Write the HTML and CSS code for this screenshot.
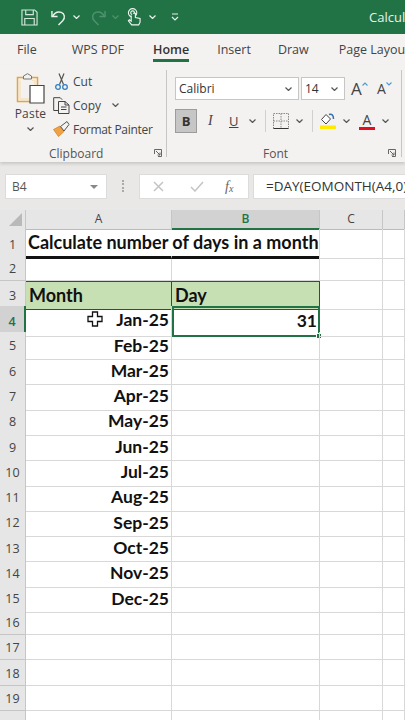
FILE: index.html
```html
<!DOCTYPE html>
<html lang="en">
<head>
<meta charset="utf-8">
<title>Calculate number of days</title>
<link rel="stylesheet" href="styles.css">
</head>
<body>
<div class="app">
  <header class="titlebar">
    <svg class="qa save" width="17" height="17" viewBox="0 0 18 18" fill="none" stroke="#d5e8dc" stroke-width="1.2"><path d="M1 1h13.500L17 3.500V17H1z"/><path d="M5 1v5h8V1M4 17v-7h10v7"/></svg>
    <svg class="qa undo" width="15" height="17" viewBox="0 0 16 18" fill="none" stroke="#e8f2ec" stroke-width="1.5"><path d="M1 2v6h6"/><path d="M1.500 8C4 3.500 8 2.500 11 3.500c3.500 1.300 4.500 5.500 1.500 9L8 17"/></svg>
    <svg class="qa chev-u" width="7" height="4" viewBox="0 0 7 4" fill="none" stroke="#e8f2ec" stroke-width="1.2"><path d="M.5.5l3 3 3-3"/></svg>
    <svg class="qa redo" width="15" height="17" viewBox="0 0 16 18" fill="none" stroke="#4f9270" stroke-width="1.5"><path d="M15 2v6H9"/><path d="M14.500 8C12 3.500 8 2.500 5 3.500 1.500 4.800.5 9 3.500 12.500L8 17"/></svg>
    <svg class="qa chev-r" width="7" height="4" viewBox="0 0 7 4" fill="none" stroke="#4f9270" stroke-width="1.2"><path d="M.5.5l3 3 3-3"/></svg>
    <svg class="qa touch" width="14" height="18" viewBox="0 0 15 19" fill="none" stroke="#eef6f1" stroke-width="1.2"><circle cx="6" cy="5" r="4.500"/><circle cx="6" cy="5" r="2"/><path d="M4.500 8v6l-2-1.500-1 1L5 18h7.500l1.500-3v-4l-5-1V5.500H6.500" fill="#217346"/></svg>
    <svg class="qa chev-t" width="7" height="4" viewBox="0 0 7 4" fill="none" stroke="#e8f2ec" stroke-width="1.2"><path d="M.5.5l3 3 3-3"/></svg>
    <svg class="qa custom" width="8" height="8" viewBox="0 0 8 8" fill="none" stroke="#e8f2ec" stroke-width="1.2"><path d="M1 1h6M1 4l3 3 3-3"/></svg>
    <span class="doc-title">Calculate number of days</span>
  </header>

  <nav class="tabs">
    <span class="tab t-file">File</span>
    <span class="tab t-wps">WPS PDF</span>
    <span class="tab t-home">Home</span>
    <span class="tab t-insert">Insert</span>
    <span class="tab t-draw">Draw</span>
    <span class="tab t-page">Page Layout</span>
  </nav>

  <section class="ribbon">
    <div class="group clipboard">
      <div class="group-body clip-body">
        <div class="paste">
          <svg class="paste-icon" width="29" height="31" viewBox="0 0 29 31" fill="none"><path d="M7 4.500H1.500V28.500H14" stroke="#e8a33d" stroke-width="1.500"/><path d="M15 4.500h6.500V12" stroke="#e8a33d" stroke-width="1.500"/><path d="M4 7.500V26h9.500M16 7.500h3V12" stroke="#f7e2bd" stroke-width="1.500"/><path d="M7.500 6V3L11.500.7 15.500 3v3z" fill="#f3f2f1" stroke="#777" stroke-width="1"/><path d="M14 12.500H28V30H14z" fill="#fff" stroke="#444" stroke-width="1.200"/></svg>
          <span class="paste-label">Paste</span>
          <svg class="paste-chev" width="7" height="4" viewBox="0 0 7 4" fill="none" stroke="#555" stroke-width="1.200"><path d="M.5.5l3 3 3-3"/></svg>
        </div>
        <div class="clip-list">
          <div class="clip-row">
            <svg class="clip-icon" width="17" height="17" viewBox="0 0 17 17" fill="none"><path d="M6 .5l4.500 11M11 .5l-4.500 11" stroke="#555" stroke-width="1.200"/><circle cx="5" cy="14" r="2.300" stroke="#2f7fc1" stroke-width="1.300"/><circle cx="12" cy="14" r="2.300" stroke="#2f7fc1" stroke-width="1.300"/></svg>
            <span>Cut</span>
          </div>
          <div class="clip-row">
            <svg class="clip-icon" width="17" height="17" viewBox="0 0 17 17" fill="none" stroke="#444" stroke-width="1"><path d="M6 13.500H.7V.7h6.500l2 2"/><path d="M5.500 4.500h6.500l4 3.500v8.500H5.500z" fill="#f3f2f1"/><path d="M8 10h5.500M8 12.500h5.500M12 4.500V8h4"/></svg>
            <span>Copy</span>
            <svg class="copy-chev" width="7" height="4" viewBox="0 0 7 4" fill="none" stroke="#555" stroke-width="1.200"><path d="M.5.5l3 3 3-3"/></svg>
          </div>
          <div class="clip-row">
            <svg class="clip-icon" width="17" height="16" viewBox="0 0 17 16" fill="none"><path d="M7 5L.5 8.500l5 7L11 10.500z" fill="#eea243" stroke="#d9822b" stroke-width=".8"/><path d="M7.500 5.500l3.500 4.500 5-6.500-2-3z" fill="#f3f2f1" stroke="#555" stroke-width="1"/></svg>
            <span class="painter">Format Painter</span>
          </div>
        </div>
      </div>
      <div class="group-foot clip-foot">
        <span class="group-name">Clipboard</span>
        <svg class="launcher" width="8" height="8" viewBox="0 0 8 8" fill="none" stroke="#666"><path d="M.5 5V.5H7.500V7.500H4"/><path d="M2 2l4 4M6 3.500V6H3.500"/></svg>
      </div>
    </div>

    <div class="group font">
      <div class="group-body font-body">
        <div class="font-row">
          <div class="combo combo-name"><span>Calibri</span><svg width="7" height="4" viewBox="0 0 7 4" fill="none" stroke="#555" stroke-width="1.200"><path d="M.5.5l3 3 3-3"/></svg></div>
          <div class="combo combo-size"><span>14</span><svg width="7" height="4" viewBox="0 0 7 4" fill="none" stroke="#555" stroke-width="1.200"><path d="M.5.5l3 3 3-3"/></svg></div>
          <span class="grow-a">A<svg width="6" height="4" viewBox="0 0 6 4" fill="none" stroke="#4a9bd4" stroke-width="1.100"><path d="M.5 3.500L3 1l2.500 2.500"/></svg></span>
          <span class="shrink-a">A<svg width="6" height="4" viewBox="0 0 6 4" fill="none" stroke="#4a9bd4" stroke-width="1.100"><path d="M.5.5L3 3l2.500-2.500"/></svg></span>
        </div>
        <div class="font-row format-row">
          <span class="btn-b">B</span>
          <span class="btn-i">I</span>
          <span class="btn-u">U</span>
          <svg class="chev c-u" width="7" height="4" viewBox="0 0 7 4" fill="none" stroke="#555" stroke-width="1.200"><path d="M.5.5l3 3 3-3"/></svg>
          <span class="vsep s1"></span>
          <svg class="borders" width="16" height="16" viewBox="0 0 16 16" fill="none" stroke="#888" stroke-width="1" stroke-dasharray="1.500 1"><path d="M.5.500h15v15H.5zM8 .5v15M.5 8h15"/><path d="M.5 15.500h15" stroke="#333" stroke-dasharray="none"/></svg>
          <svg class="chev c-b" width="7" height="4" viewBox="0 0 7 4" fill="none" stroke="#555" stroke-width="1.200"><path d="M.5.5l3 3 3-3"/></svg>
          <span class="vsep s2"></span>
          <svg class="fill" width="16" height="16" viewBox="0 0 16 16" fill="none"><path d="M6 1.500L1.500 6.500 6 11l4.500-5z" fill="#fff" stroke="#444"/><path d="M9 1.500c3-1 4.500 1 4.500 4.500" stroke="#2f6fb3" stroke-width="1.500"/><rect y="12.500" width="16" height="3.500" fill="#ffea00"/></svg>
          <svg class="chev c-f" width="7" height="4" viewBox="0 0 7 4" fill="none" stroke="#555" stroke-width="1.200"><path d="M.5.5l3 3 3-3"/></svg>
          <span class="color-a">A</span>
          <svg class="chev c-a" width="7" height="4" viewBox="0 0 7 4" fill="none" stroke="#555" stroke-width="1.200"><path d="M.5.5l3 3 3-3"/></svg>
        </div>
      </div>
      <div class="group-foot font-foot">
        <span class="group-name">Font</span>
        <svg class="launcher" width="8" height="8" viewBox="0 0 8 8" fill="none" stroke="#666"><path d="M.5 5V.5H7.500V7.500H4"/><path d="M2 2l4 4M6 3.500V6H3.500"/></svg>
      </div>
    </div>
  </section>

  <section class="formula">
    <div class="name-box"><span>B4</span><i class="name-arrow"></i></div>
    <span class="grip"></span>
    <div class="fx-box">
      <svg width="11" height="11" viewBox="0 0 11 11" fill="none" stroke="#c4c4c4" stroke-width="1.500"><path d="M1 1l9 9M10 1l-9 9"/></svg>
      <svg width="14" height="11" viewBox="0 0 14 11" fill="none" stroke="#c4c4c4" stroke-width="1.500"><path d="M1 6l4 4 8-9"/></svg>
      <span class="fx">f<sub>x</sub></span>
    </div>
    <div class="formula-input">=DAY(EOMONTH(A4,0))</div>
  </section>

  <section class="sheet">
    <div class="row col-head">
      <div class="corner"><i></i></div><div class="ch">A</div><div class="ch sel">B</div><div class="ch">C</div><div class="ch last"></div>
    </div>
    <div class="row r1"><div class="rh">1</div><div class="c a thick title">Calculate number of days in a month</div><div class="c b thick"></div><div class="c d"></div><div class="c e"></div></div>
    <div class="row"><div class="rh">2</div><div class="c a"></div><div class="c b"></div><div class="c d"></div><div class="c e"></div></div>
    <div class="row"><div class="rh">3</div><div class="c a hd">Month</div><div class="c b hd">Day</div><div class="c d"></div><div class="c e"></div></div>
    <div class="row"><div class="rh active">4</div><div class="c a val cursor-cell"><svg class="cursor" width="16" height="16" viewBox="0 0 16 16" fill="#fff" stroke="#111" stroke-width="1.300"><path d="M5.500 1h5v4.500H15v5h-4.500V15h-5v-4.500H1v-5h4.500z"/></svg>Jan-25</div><div class="c b val current">31<i class="handle"></i></div><div class="c d"></div><div class="c e"></div></div>
    <div class="row"><div class="rh">5</div><div class="c a val">Feb-25</div><div class="c b"></div><div class="c d"></div><div class="c e"></div></div>
    <div class="row"><div class="rh">6</div><div class="c a val">Mar-25</div><div class="c b"></div><div class="c d"></div><div class="c e"></div></div>
    <div class="row"><div class="rh">7</div><div class="c a val">Apr-25</div><div class="c b"></div><div class="c d"></div><div class="c e"></div></div>
    <div class="row"><div class="rh">8</div><div class="c a val">May-25</div><div class="c b"></div><div class="c d"></div><div class="c e"></div></div>
    <div class="row"><div class="rh">9</div><div class="c a val">Jun-25</div><div class="c b"></div><div class="c d"></div><div class="c e"></div></div>
    <div class="row"><div class="rh">10</div><div class="c a val">Jul-25</div><div class="c b"></div><div class="c d"></div><div class="c e"></div></div>
    <div class="row"><div class="rh">11</div><div class="c a val">Aug-25</div><div class="c b"></div><div class="c d"></div><div class="c e"></div></div>
    <div class="row"><div class="rh">12</div><div class="c a val">Sep-25</div><div class="c b"></div><div class="c d"></div><div class="c e"></div></div>
    <div class="row"><div class="rh">13</div><div class="c a val">Oct-25</div><div class="c b"></div><div class="c d"></div><div class="c e"></div></div>
    <div class="row"><div class="rh">14</div><div class="c a val">Nov-25</div><div class="c b"></div><div class="c d"></div><div class="c e"></div></div>
    <div class="row"><div class="rh">15</div><div class="c a val">Dec-25</div><div class="c b"></div><div class="c d"></div><div class="c e"></div></div>
    <div class="row"><div class="rh">16</div><div class="c a"></div><div class="c b"></div><div class="c d"></div><div class="c e"></div></div>
    <div class="row"><div class="rh">17</div><div class="c a"></div><div class="c b"></div><div class="c d"></div><div class="c e"></div></div>
    <div class="row"><div class="rh">18</div><div class="c a"></div><div class="c b"></div><div class="c d"></div><div class="c e"></div></div>
    <div class="row"><div class="rh">19</div><div class="c a"></div><div class="c b"></div><div class="c d"></div><div class="c e"></div></div>
    <div class="row"><div class="rh"></div><div class="c a"></div><div class="c b"></div><div class="c d"></div><div class="c e"></div></div>
  </section>
</div>
</body>
</html>
```
FILE: styles.css
```css
* { box-sizing: border-box; }
html, body { margin: 0; padding: 0; }
body { width: 405px; height: 720px; overflow: hidden; background: #fff; font-family: "Open Sans", "Noto Sans", sans-serif; color: #444; }
.app { width: 405px; height: 720px; overflow: hidden; display: flex; flex-direction: column; }

/* Title bar */
.titlebar { flex: none; height: 34px; background: #217346; display: flex; align-items: center; white-space: nowrap; overflow: hidden; }
.qa { flex: none; display: block; }
.save { margin-left: 21px; }
.undo { margin-left: 13px; }
.chev-u { margin-left: 7px; }
.redo { margin-left: 11px; }
.chev-r { margin-left: 6px; }
.touch { margin-left: 8px; }
.chev-t { margin-left: 8px; }
.custom { margin-left: 15px; }
.doc-title { margin-left: 190px; color: #e8f2ec; font-size: 13px; flex: none; }

/* Tabs */
.tabs { flex: none; height: 31px; background: #f3f2f1; display: flex; white-space: nowrap; overflow: hidden; font-size: 12.500px; color: #444; }
.tab { flex: none; height: 28px; padding-top: 7px; line-height: 18px; }
.t-file { margin-left: 17px; }
.t-wps { margin-left: 35px; }
.t-home { margin-left: 29px; font-weight: 600; color: #333; border-bottom: 3px solid #217346; height: 28px; }
.t-insert { margin-left: 28px; }
.t-draw { margin-left: 27px; }
.t-page { margin-left: 30px; }

/* Ribbon */
.ribbon { flex: none; height: 97px; background: #f3f2f1; display: flex; box-shadow: 0 2px 3px rgba(0,0,0,.14); position: relative; font-size: 12px; color: #444; }
.group { display: flex; flex-direction: column; position: relative; }
.group::after { content: ""; position: absolute; right: 0; top: 5px; bottom: 5px; width: 1px; background: #c8c6c4; }
.group-body { flex: 1; min-height: 0; }
.group-foot { flex: none; height: 18px; display: flex; align-items: center; color: #555; font-size: 12px; }
.launcher { flex: none; margin-left: auto; }
.clipboard { width: 167px; }
.clip-body { display: flex; padding-left: 16px; }
.paste { width: 29px; display: flex; flex-direction: column; align-items: center; padding-top: 8px; margin-right: 6px; }
.paste-icon { display: block; flex: none; }
.paste-label { line-height: 16px; margin-top: 2px; letter-spacing: .2px; }
.paste-chev { margin-top: 5px; }
.clip-list { display: flex; flex-direction: column; padding-top: 4px; }
.clip-row { flex: none; height: 24px; display: flex; align-items: center; font-size: 12px; white-space: nowrap; }
.clip-icon { flex: none; margin-right: 3px; margin-left: 2px; }
.copy-chev { margin-left: 11px; }
.painter { letter-spacing: -.3px; }
.clip-foot { padding: 0 5px 0 49px; }
.font { width: 235px; }
.font-body { padding: 12px 0 0 8px; display: flex; flex-direction: column; }
.font-row { display: flex; align-items: center; height: 23px; }
.combo { height: 23px; background: #fff; border: 1px solid #c8c6c4; display: flex; align-items: center; justify-content: space-between; padding: 0 6px 0 3px; font-size: 12px; color: #333; }
.combo-name { width: 124px; margin-right: 2px; }
.combo-size { width: 44px; margin-right: 6px; }
.grow-a, .shrink-a { display: flex; align-items: flex-start; color: #444; }
.grow-a { font-size: 17px; line-height: 20px; width: 26px; }
.shrink-a { font-size: 14px; line-height: 20px; }
.grow-a svg, .shrink-a svg { margin-top: 3px; }
.format-row { margin-top: 9px; height: 24px; }
.btn-b { width: 22px; height: 24px; background: #c6c6c6; border: 1px solid #9c9c9c; display: flex; align-items: center; justify-content: center; font-weight: 700; font-size: 13px; color: #333; }
.btn-i { margin-left: 11px; width: 10px; font-family: "Liberation Serif", serif; font-style: italic; font-size: 14px; color: #444; }
.btn-u { margin-left: 11px; width: 10px; font-size: 13px; text-decoration: underline; color: #444; }
.chev { flex: none; }
.c-u { margin-left: 10px; }
.vsep { width: 1px; height: 22px; background: #d2d0ce; flex: none; }
.s1 { margin-left: 9px; }
.borders { flex: none; margin-left: 7px; }
.c-b { margin-left: 7px; }
.s2 { margin-left: 9px; }
.fill { flex: none; margin-left: 7px; }
.c-f { margin-left: 7px; }
.color-a { margin-left: 9px; width: 16px; font-size: 14px; line-height: 14px; text-align: center; border-bottom: 3px solid #e2101e; color: #444; }
.c-a { margin-left: 7px; }
.font-foot { padding: 0 6px 0 96px; }

/* Formula bar */
.formula { flex: none; height: 48px; background: #e9e8e7; display: flex; padding: 12px 0 0 5px; align-items: flex-start; font-size: 12px; color: #444; white-space: nowrap; overflow: hidden; }
.name-box { flex: none; width: 102px; height: 25px; background: #fff; border: 1px solid #dcdcdc; display: flex; align-items: center; justify-content: space-between; padding: 0 8px 0 6px; color: #555; }
.name-arrow { width: 0; height: 0; border: 4px solid transparent; border-top: 4px solid #888; border-bottom: 0; }
.grip { flex: none; width: 2px; height: 12px; margin: 6px 15px 0 15px; border-left: 2px dotted #aaa; }
.fx-box { flex: none; width: 110px; height: 25px; background: #fff; border: 1px solid #dcdcdc; display: flex; align-items: center; padding-left: 13px; }
.fx-box svg:nth-child(2) { margin-left: 26px; }
.fx { margin-left: 21px; font-family: "Liberation Serif", serif; font-style: italic; font-size: 14px; color: #666; line-height: 14px; }
.fx sub { font-size: 10px; line-height: 0; vertical-align: -1px; }
.formula-input { margin-left: 4px; flex: none; width: 170px; height: 25px; background: #fff; border: 1px solid #dcdcdc; line-height: 23px; padding-left: 12px; color: #333; font-size: 13.500px; }

/* Sheet */
.sheet { flex: 1; min-height: 0; background: #fff; display: flex; flex-direction: column; }
.row { flex: none; height: 25.300px; display: grid; grid-template-columns: 26px 146px 148px 63px 22px; font-family: Lato, "Liberation Sans", sans-serif; color: #111; }
.r1 { height: 26.700px; }
.col-head { height: 19px; }
.corner { background: #e6e6e6; border-right: 1px solid #c6c6c6; border-bottom: 1px solid #bbb; display: flex; align-items: flex-end; justify-content: flex-end; padding: 0 3px 3px 0; }
.corner i { width: 13px; height: 13px; background: #b9b9b9; clip-path: polygon(100% 0, 100% 100%, 0 100%); }
.ch { background: #e6e6e6; border-right: 1px solid #c6c6c6; border-bottom: 1px solid #bbb; font-family: "Open Sans", sans-serif; font-size: 12px; line-height: 18px; text-align: center; color: #444; }
.ch.sel { background: #d2d2d2; border-bottom: 2px solid #217346; color: #217346; font-weight: 600; }
.rh { background: #e6e6e6; border-right: 1px solid #c6c6c6; border-bottom: 1px solid #c6c6c6; padding-top: 1px; font-family: "Open Sans", sans-serif; font-size: 12.500px; color: #444; display: flex; align-items: center; justify-content: center; }
.rh.active { background: #d2d2d2; color: #217346; font-weight: 600; border-right: 2px solid #217346; }
.c { border-right: 1px solid #d8d8d8; border-bottom: 1px solid #d8d8d8; font-size: 17.500px; font-weight: 700; line-height: 27.500px; white-space: nowrap; min-width: 0; position: relative; }
.title { padding-left: 2px; overflow: visible; z-index: 1; border-right-color: transparent; font-size: 18px; line-height: 27px; }
.thick { border-bottom: 3px solid #111; }
.hd { background: #c6e0b4; border: 1px solid #3b4a3b; border-left-width: 0; padding-left: 3px; font-size: 18px; line-height: 27.500px; }
.val { text-align: right; padding-right: 2px; }
.current { border: 2px solid #217346; padding-right: 1px; line-height: 26.500px; }
.handle { position: absolute; right: -4px; bottom: -4px; border: 1px solid #fff; background: #217346; box-sizing: content-box; width: 4px; height: 4px; }
.cursor { position: absolute; left: 61px; top: 5px; }
```
